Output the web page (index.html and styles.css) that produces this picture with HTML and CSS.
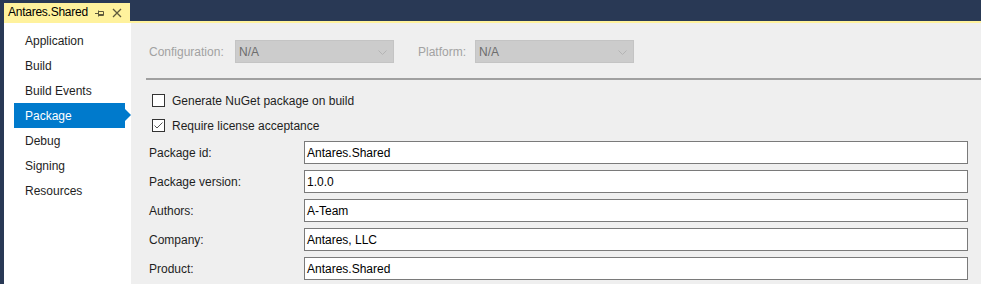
FILE: index.html
```html
<!DOCTYPE html>
<html>
<head>
<title>Antares.Shared - Package</title>
<link rel="stylesheet" href="styles.css">
</head>
<body>
  <div class="tabbar">
    <div class="tab">
      <span class="tab-title">Antares.Shared</span>
      <svg class="tab-icon" width="10" height="10" viewBox="0 0 10 10">
        <path d="M0 5.5H3.5M3.5 2.5V8.5M3.5 3.5H8.5V7.5H3.5M4 6.5H8.5" stroke="#5f5a3c" fill="none" stroke-width="1"/>
      </svg>
      <svg class="tab-icon close" width="10" height="10" viewBox="0 0 10 10">
        <path d="M1 1L9 9M9 1L1 9" stroke="#5f5a3c" fill="none" stroke-width="1.3"/>
      </svg>
    </div>
  </div>

  <div class="frame">
    <ul class="nav">
      <li>Application</li>
      <li>Build</li>
      <li>Build Events</li>
      <li class="selected">Package</li>
      <li>Debug</li>
      <li>Signing</li>
      <li>Resources</li>
    </ul>

    <div class="page">
      <div class="config-row">
        <span class="dim-label">Configuration:</span>
        <div class="combo">N/A
          <svg class="chevron" width="9" height="5" viewBox="0 0 9 5"><path d="M0.5 0.5L4.5 4.5L8.5 0.5" stroke="#b4b4b4" fill="none"/></svg>
        </div>
        <span class="dim-label platform">Platform:</span>
        <div class="combo">N/A
          <svg class="chevron" width="9" height="5" viewBox="0 0 9 5"><path d="M0.5 0.5L4.5 4.5L8.5 0.5" stroke="#b4b4b4" fill="none"/></svg>
        </div>
      </div>

      <div class="separator"></div>

      <div class="check"><span class="box"></span>Generate NuGet package on build</div>
      <div class="check"><span class="box">
        <svg width="11" height="11" viewBox="0 0 11 11"><path d="M1.5 5.5L4 8L9.5 2.5" stroke="#555" fill="none" stroke-width="1"/></svg>
      </span>Require license acceptance</div>

      <div class="field"><span class="field-label">Package id:</span><div class="input">Antares.Shared</div></div>
      <div class="field"><span class="field-label">Package version:</span><div class="input">1.0.0</div></div>
      <div class="field"><span class="field-label">Authors:</span><div class="input">A-Team</div></div>
      <div class="field"><span class="field-label">Company:</span><div class="input">Antares, LLC</div></div>
      <div class="field"><span class="field-label">Product:</span><div class="input">Antares.Shared</div></div>
    </div>
  </div>
</body>
</html>
```

FILE: styles.css
```css
html, body {
  margin: 0;
  height: 100%;
  overflow: hidden;
}
body {
  background: #293955;
  padding-left: 4px;
  box-sizing: border-box;
  display: flex;
  flex-direction: column;
  font-family: "Liberation Sans", Arial, sans-serif;
  font-size: 12px;
  color: #1e1e1e;
}
.tabbar {
  height: 21px;
  flex-shrink: 0;
  display: flex;
  align-items: flex-end;
}
.tab {
  height: 18px;
  width: 126px;
  background: #fff29d;
  display: flex;
  align-items: center;
  box-sizing: border-box;
  padding-left: 4px;
}
.tab-title {
  color: #000;
  letter-spacing: -0.25px;
  margin-right: 7px;
}
.tab-icon {
  margin-top: 1px;
}
.tab-icon.close {
  margin-left: 7px;
}
.frame {
  border-top: 2px solid #fff29d;
  display: flex;
  flex: 1;
  min-height: 0;
}
.nav {
  list-style: none;
  margin: 0;
  padding: 5px 0 0 10px;
  width: 117px;
  background: #fff;
}
.nav li {
  height: 25px;
  line-height: 26px;
  padding-left: 11px;
  width: 111px;
  box-sizing: border-box;
  position: relative;
}
.nav li.selected {
  background: #007acc;
  color: #fff;
}
.nav li.selected::after {
  content: "";
  position: absolute;
  right: -6px;
  top: 6px;
  border-left: 6px solid #007acc;
  border-top: 6px solid transparent;
  border-bottom: 6px solid transparent;
}
.page {
  flex: 1;
  background: #efefef;
  padding: 17px 13px 0 18px;
}
.config-row {
  display: flex;
  align-items: center;
  height: 23px;
}
.dim-label {
  color: #a2a2a2;
  width: 86px;
}
.dim-label.platform {
  width: 57px;
  margin-left: 24px;
}
.combo {
  width: 159px;
  height: 23px;
  box-sizing: border-box;
  background: #cccccc;
  border: 1px solid #c4c4c4;
  color: #6d6d6d;
  padding-left: 3px;
  display: flex;
  align-items: center;
  position: relative;
}
.chevron {
  position: absolute;
  right: 6px;
  top: 9px;
}
.separator {
  height: 2px;
  background: #a0a0a0;
  margin: 15px -13px 0 -3px;
}
.check {
  display: flex;
  align-items: center;
  height: 25px;
  padding-left: 3px;
}
.box {
  width: 13px;
  height: 13px;
  box-sizing: border-box;
  border: 1px solid #333;
  background: #fff;
  margin-right: 7px;
  display: flex;
  align-items: center;
  justify-content: center;
}
.separator + .check {
  margin-top: 8px;
}
.field {
  display: flex;
  align-items: center;
  height: 23px;
  margin-top: 6px;
}
.check + .field {
  margin-top: 3px;
}
.field-label {
  width: 155px;
}
.input {
  flex: 1;
  height: 23px;
  box-sizing: border-box;
  border: 1px solid #7a7a7a;
  background: #fff;
  color: #000;
  padding-left: 2px;
  display: flex;
  align-items: center;
}
```
